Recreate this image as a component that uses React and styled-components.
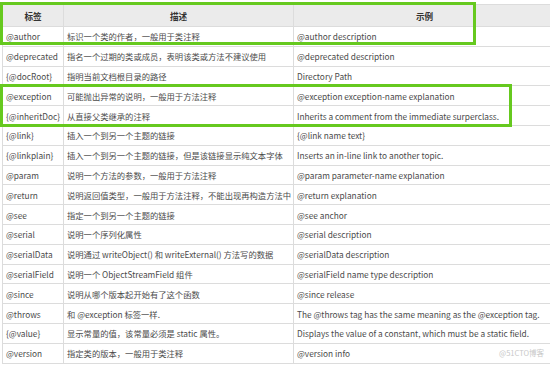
import React from "react";
import styled, { createGlobalStyle } from "styled-components";

const GlobalStyle = createGlobalStyle`
    html, body {
        margin: 0;
        padding: 0;
        background: #fff;
        overflow: hidden;
    }
    body {
        font-family: "Noto Sans CJK SC", "Noto Sans", sans-serif;
    }
`;

const Page = styled.div`
    position: relative;
    width: 550px;
    height: 366px;
    overflow: hidden;
    padding: 4px 0 0 2px;
    box-sizing: border-box;
`;

const Table = styled.div`
    display: grid;
    grid-template-columns: 61px 230px 262px;
    grid-template-rows: 22px;
    grid-auto-rows: 19.8px;
    width: 553px;
    border-top: 1px solid #dcdcdc;
    border-left: 1px solid #dcdcdc;
    box-sizing: border-box;
`;

const Cell = styled.div`
    display: flex;
    align-items: center;
    justify-content: ${(props) => (props.head ? "center" : "flex-start")};
    padding: 0 ${(props) => (props.head ? "0" : "3px")};
    border-right: 1px solid #dcdcdc;
    border-bottom: 1px solid #dcdcdc;
    background: ${(props) => (props.head ? "#ebebeb" : "#fff")};
    color: ${(props) => (props.head ? "#333" : "#4b4b4b")};
    font-size: ${(props) => (props.head ? "8.6px" : "8.3px")};
    font-weight: ${(props) => (props.head ? "bold" : "normal")};
    white-space: nowrap;
    overflow: hidden;
    box-sizing: border-box;
`;

const Highlight = styled.div`
    position: absolute;
    left: 0;
    top: ${(props) => props.top}px;
    width: ${(props) => props.w}px;
    height: ${(props) => props.h}px;
    border: 3px solid #66c91f;
    box-sizing: border-box;
    pointer-events: none;
`;

const Watermark = styled.span`
    position: absolute;
    right: 6px;
    bottom: 8px;
    font-size: 7.5px;
    color: #c8c8c8;
`;

const rows = [
    ["@author", "标识一个类的作者，一般用于类注释", "@author description"],
    ["@deprecated", "指名一个过期的类或成员，表明该类或方法不建议使用", "@deprecated description"],
    ["{@docRoot}", "指明当前文档根目录的路径", "Directory Path"],
    ["@exception", "可能抛出异常的说明，一般用于方法注释", "@exception exception-name explanation"],
    ["{@inheritDoc}", "从直接父类继承的注释", "Inherits a comment from the immediate surperclass."],
    ["{@link}", "插入一个到另一个主题的链接", "{@link name text}"],
    ["{@linkplain}", "插入一个到另一个主题的链接，但是该链接显示纯文本字体", "Inserts an in-line link to another topic."],
    ["@param", "说明一个方法的参数，一般用于方法注释", "@param parameter-name explanation"],
    ["@return", "说明返回值类型，一般用于方法注释，不能出现再构造方法中", "@return explanation"],
    ["@see", "指定一个到另一个主题的链接", "@see anchor"],
    ["@serial", "说明一个序列化属性", "@serial description"],
    ["@serialData", "说明通过 writeObject() 和 writeExternal() 方法写的数据", "@serialData description"],
    ["@serialField", "说明一个 ObjectStreamField 组件", "@serialField name type description"],
    ["@since", "说明从哪个版本起开始有了这个函数", "@since release"],
    ["@throws", "和 @exception 标签一样.", "The @throws tag has the same meaning as the @exception tag."],
    ["{@value}", "显示常量的值，该常量必须是 static 属性。", "Displays the value of a constant, which must be a static field."],
    ["@version", "指定类的版本，一般用于类注释", "@version info"],
];

const App = () => {
    return (
        <Page>
            <GlobalStyle />
            <Table>
                <Cell head>标签</Cell>
                <Cell head>描述</Cell>
                <Cell head>示例</Cell>
                {rows.map((r) => (
                    <React.Fragment key={r[0]}>
                        <Cell>{r[0]}</Cell>
                        <Cell>{r[1]}</Cell>
                        <Cell>{r[2]}</Cell>
                    </React.Fragment>
                ))}
            </Table>
            <Highlight top={2} w={476} h={43} />
            <Highlight top={84} w={512} h={43} />
            <Watermark>@51CTO博客</Watermark>
        </Page>
    );
};

export default App;
